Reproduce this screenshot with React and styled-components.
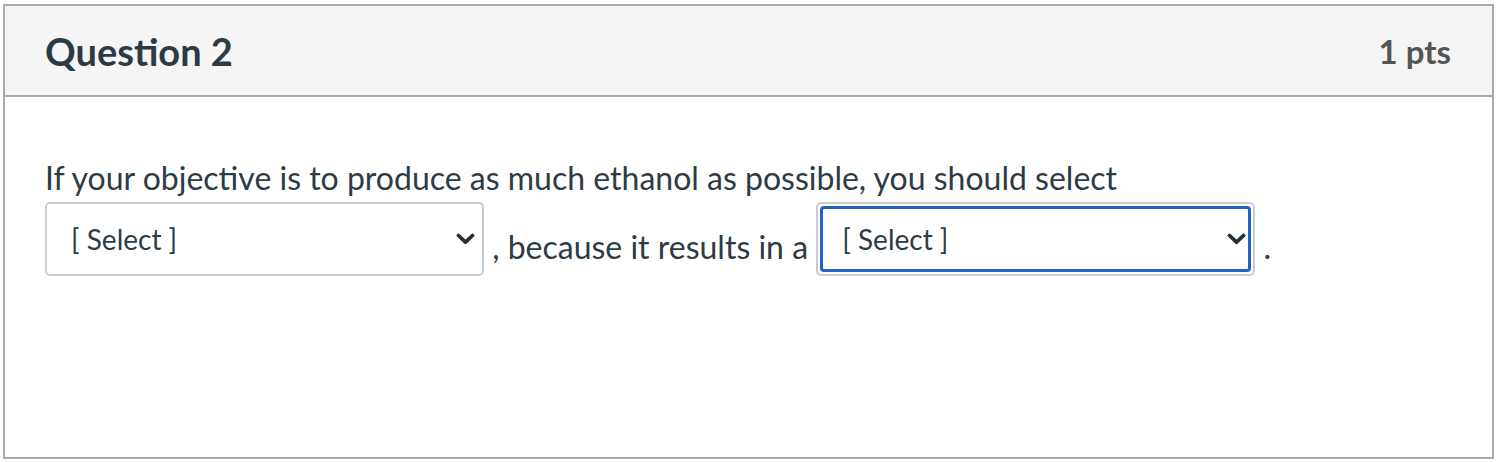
import React from "react";
import styled, { createGlobalStyle } from "styled-components";

const GlobalStyle = createGlobalStyle`
  html, body {
    margin: 0;
    padding: 0;
    background: #ffffff;
  }
  body {
    font-family: Lato, "Noto Sans", "Liberation Sans", sans-serif;
    color: #2d3b45;
  }
`;

const Card = styled.div`
  margin: 4px 12px 0 3px;
  height: 455px;
  border: 2px solid #aaaaaa;
  box-sizing: border-box;
  display: flex;
  flex-direction: column;
`;

const Header = styled.div`
  height: 91px;
  background: #f5f5f5;
  border-bottom: 2px solid #aaaaaa;
  box-sizing: border-box;
  display: flex;
  align-items: center;
  justify-content: space-between;
  padding: 0 41px 0 40px;
`;

const Title = styled.h2`
  margin: 0;
  font-size: 38px;
  font-weight: 700;
  color: #2d3b45;
`;

const Points = styled.span`
  font-size: 33px;
  font-weight: 700;
  color: #555555;
`;

const Body = styled.div`
  padding: 60px 40px 0 40px;
`;

const Sentence = styled.p`
  margin: 0;
  font-size: 32px;
  line-height: 42px;
  color: #2d3b45;
`;

const SelectWrap = styled.span`
  position: relative;
  display: inline-block;
  vertical-align: middle;
  width: 439px;
  height: 74px;
  box-sizing: border-box;
  border: 2px solid #c7cdd1;
  border-radius: 5px;
  padding: ${p => (p.$focused ? "2px" : "0")};
  margin: 3px 0 26px 0;
  background: #fff;
`;

const SelectBox = styled.select`
  appearance: none;
  -webkit-appearance: none;
  width: 100%;
  height: 100%;
  box-sizing: border-box;
  border: ${p => (p.$focused ? "3px solid #2163c5" : "none")};
  border-radius: 4px;
  background: transparent;
  outline: none;
  font-family: Lato, "Noto Sans", "Liberation Sans", sans-serif;
  font-size: 28px;
  color: #2d3b45;
  padding: ${p => (p.$focused ? "0 0 0 19px" : "0 0 0 24px")};
  margin: 0;
`;

const Chevron = styled.svg`
  position: absolute;
  right: 7px;
  top: 50%;
  transform: translateY(-50%);
  pointer-events: none;
`;

const Dropdown = ({ focused }) => (
  <SelectWrap $focused={focused}>
    <SelectBox $focused={focused} defaultValue="">
      <option value="">[ Select ]</option>
    </SelectBox>
    <Chevron width="19" height="12" viewBox="0 0 19 12">
      <path d="M2.5 2.5 L9.5 9.2 L16.5 2.5" fill="none" stroke="#243039" strokeWidth="3.8" strokeLinecap="round" strokeLinejoin="round" />
    </Chevron>
  </SelectWrap>
);

const App = () => (
  <>
    <GlobalStyle />
    <Card>
      <Header>
        <Title>Question 2</Title>
        <Points>1 pts</Points>
      </Header>
      <Body>
        <Sentence>
          If your objective is to produce as much ethanol as possible, you should select{" "}
          <Dropdown /> , because it results in a <Dropdown focused /> .
        </Sentence>
      </Body>
    </Card>
  </>
);

export default App;
